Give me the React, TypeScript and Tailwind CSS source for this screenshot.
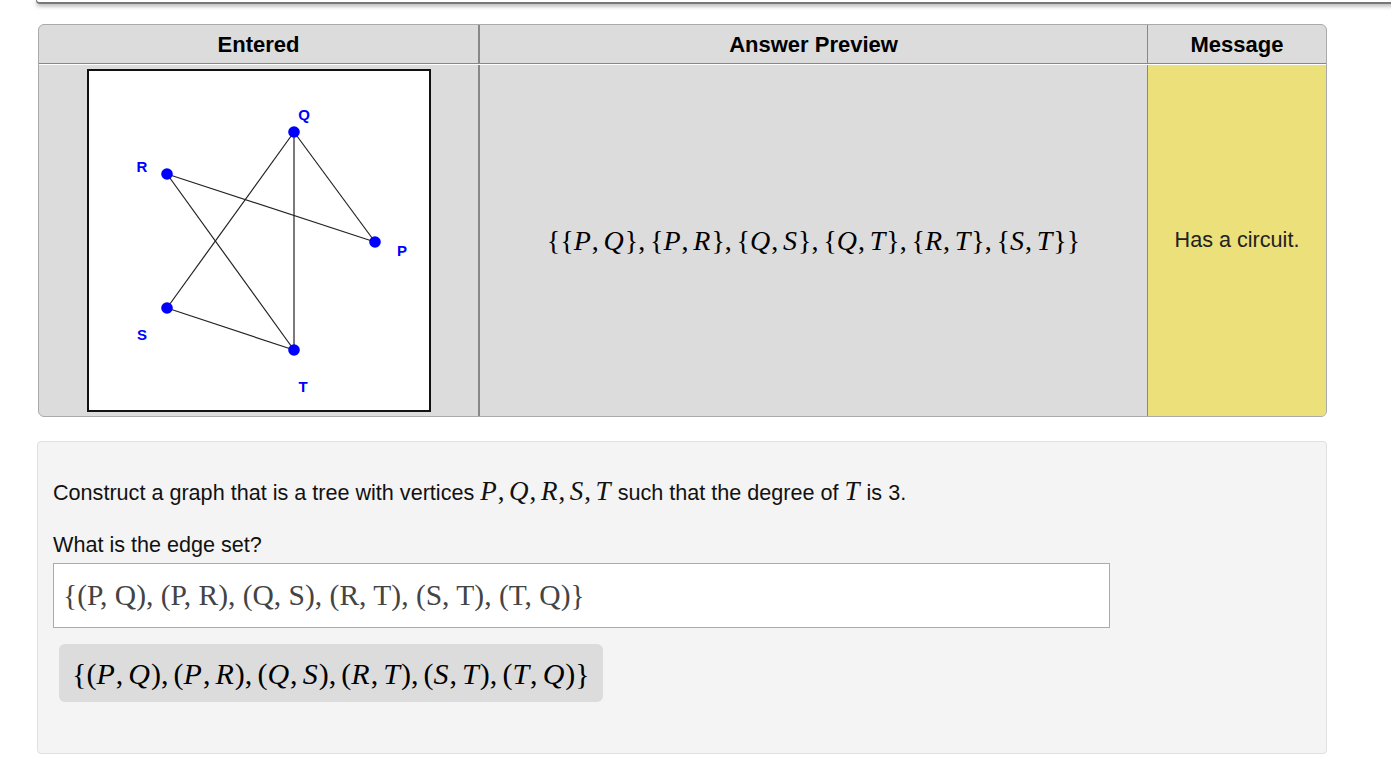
import React from "react"

const sans = { fontFamily: '"Liberation Sans", Arial, sans-serif' }
const serif = { fontFamily: '"Liberation Serif", "Times New Roman", serif' }

// renders a math string; capital letters in italic, thin space after commas
function MathText({ text }: { text: string }) {
  return (
    <span style={serif}>
      {text.split("").map((ch, i) =>
        /[A-Z]/.test(ch) ? (
          <i key={i} className="pr-[1px]">
            {ch}
          </i>
        ) : ch === "," ? (
          <span key={i} className="mr-[0.17em]">
            {ch}
          </span>
        ) : (
          <span key={i}>{ch}</span>
        )
      )}
    </span>
  )
}

const nodes = [
  { id: "Q", x: 205, y: 61, lx: 215, ly: 45 },
  { id: "R", x: 78, y: 103, lx: 53, ly: 97 },
  { id: "P", x: 286, y: 171, lx: 313, ly: 181 },
  { id: "S", x: 78, y: 237, lx: 53, ly: 265 },
  { id: "T", x: 205, y: 279, lx: 214, ly: 317 },
]

const edges = [
  ["Q", "P"],
  ["Q", "S"],
  ["Q", "T"],
  ["R", "P"],
  ["R", "T"],
  ["S", "T"],
]

function Graph() {
  const pos = (id: string) => nodes.find((n) => n.id === id)!
  return (
    <svg width="340" height="340" viewBox="0 0 340 340" className="block">
      {edges.map(([a, b]) => (
        <line
          key={a + b}
          x1={pos(a).x}
          y1={pos(a).y}
          x2={pos(b).x}
          y2={pos(b).y}
          stroke="#222"
          strokeWidth="1.2"
        />
      ))}
      {nodes.map((n) => (
        <g key={n.id}>
          <circle cx={n.x} cy={n.y} r="5.8" fill="#0000ff" />
          <text
            x={n.lx}
            y={n.ly}
            fill="#0000ff"
            fontSize="15"
            fontWeight="bold"
            fontFamily="Liberation Sans, Arial, sans-serif"
            textAnchor="middle"
            dominantBaseline="middle"
          >
            {n.id}
          </text>
        </g>
      ))}
    </svg>
  )
}

export default function App() {
  return (
    <div className="w-[1391px] h-[782px] overflow-hidden bg-white relative" style={sans}>
      {/* top panel edge */}
      <div className="ml-[36px] w-[1400px] h-[4px] bg-white border-b-2 border-l border-[#777] rounded-bl-md shadow-[0_2px_4px_rgba(0,0,0,0.35)]" />

      {/* results table */}
      <div className="ml-[38px] mt-[20px] w-[1289px] border border-[#aaa] rounded-md overflow-hidden bg-[#dcdcdc]">
        <div className="flex h-[39px] border-b border-[#888] text-[22px] font-bold text-black">
          <div className="w-[441px] flex items-center justify-center border-r-2 border-[#888]">Entered</div>
          <div className="w-[668px] flex items-center justify-center border-r border-[#888]">Answer Preview</div>
          <div className="flex-1 flex items-center justify-center">Message</div>
        </div>
        <div className="flex h-[352px] border-t border-white">
          <div className="w-[441px] flex items-center justify-center border-r-2 border-[#888]">
            <div className="w-[344px] h-[343px] bg-white border-2 border-[#111] flex items-center justify-center">
              <Graph />
            </div>
          </div>
          <div className="w-[668px] flex items-center justify-center border-r border-[#888] text-[28px] text-black">
            <MathText text="{{P,Q},{P,R},{Q,S},{Q,T},{R,T},{S,T}}" />
          </div>
          <div className="flex-1 bg-[#ebe07a] flex items-center justify-center text-[21.6px] text-[#222]">
            Has a circuit.
          </div>
        </div>
      </div>

      {/* problem box */}
      <div className="ml-[37px] mt-[24px] w-[1290px] h-[313px] bg-[#f4f4f4] border border-[#e0e0e0] rounded-sm px-[15px] pt-[34px]">
        <p className="text-[21.6px] text-[#111] leading-[30px]">
          Construct a graph that is a tree with vertices{" "}
          <span className="text-[27px]">
            <MathText text="P,Q,R,S,T" />
          </span>{" "}
          such that the degree of{" "}
          <span className="text-[27px]">
            <MathText text="T" />
          </span>{" "}
          is 3.
        </p>
        <p className="mt-[22px] text-[21.6px] text-[#111] leading-[30px]">What is the edge set?</p>
        <div className="mt-[3px] w-[1057px] h-[65px] bg-white border border-[#aaa] flex items-center pl-[9px] text-[29.5px] text-[#444]" style={serif}>
          {"{(P, Q), (P, R), (Q, S), (R, T), (S, T), (T, Q)}"}
        </div>
        <div className="mt-[16px] ml-[6px] inline-flex items-center h-[58px] px-[13px] bg-[#dcdcdc] rounded-md text-[30px] text-black">
          <MathText text="{(P,Q),(P,R),(Q,S),(R,T),(S,T),(T,Q)}" />
        </div>
      </div>
    </div>
  )
}
